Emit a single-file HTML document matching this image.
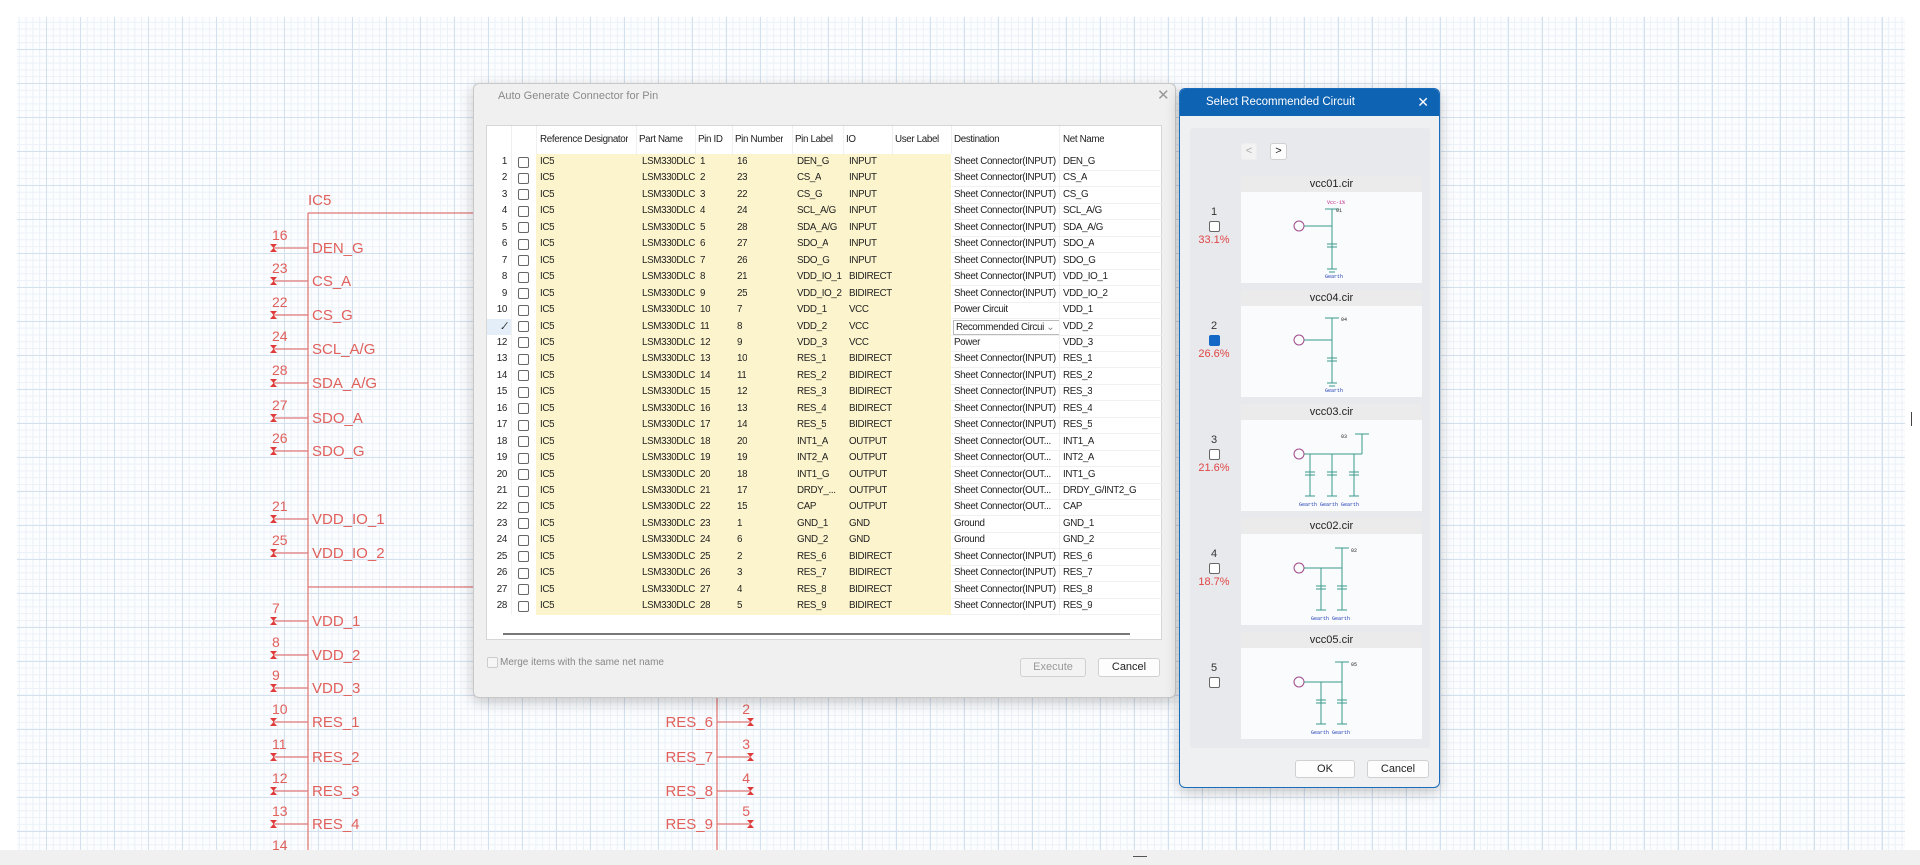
<!DOCTYPE html>
<html><head><meta charset="utf-8">
<style>
*{box-sizing:border-box;margin:0;padding:0}
body{width:1920px;height:865px;position:relative;overflow:hidden;background:#fff;font-family:"Liberation Sans",sans-serif}
#grid{position:absolute;left:17px;top:17px;width:1888px;height:833px;
background-color:#fcfdff;
background-image:
linear-gradient(to right,#d3e0ee 1px,transparent 1px),
linear-gradient(to bottom,#d3e0ee 1px,transparent 1px),
linear-gradient(to right,#ebf1f7 1px,transparent 1px),
linear-gradient(to bottom,#ebf1f7 1px,transparent 1px);
background-size:34px 34px,34px 34px,6.8px 6.8px,6.8px 6.8px;background-position:-5px -2px}
#bot{position:absolute;left:0;top:850px;width:1920px;height:15px;background:#f0f0f0}
.dlg{position:absolute;left:473px;top:83px;width:703px;height:615px;background:#f0f0f0;border:1px solid #c8c8c8;border-radius:6px;box-shadow:0 4px 14px rgba(0,0,0,.22)}
.tbl{position:absolute;left:486px;top:125px;width:676px;height:515px;background:#fff;border:1px solid #d6d6d6;font-size:9.8px;color:#222;letter-spacing:-.35px}
.c{position:absolute;white-space:nowrap;overflow:hidden}
.row{position:absolute;left:0;width:676px;height:16.45px;line-height:16.45px}
.cb{position:absolute;width:11px;height:11px;border:1px solid #555;border-radius:2px;background:#fff}
.btn{position:absolute;background:#fdfdfd;border:1px solid #d0d0d0;border-radius:3px;font-size:11px;text-align:center;color:#222}
.card{position:absolute;left:1241px;width:181px}
.card .h{height:16px;background:#ebebeb;font-size:11px;text-align:center;line-height:16px;color:#222}
.card .im{height:91px;background:#fafbfd}
.lab{position:absolute;width:40px;left:1194px;text-align:center;font-size:11px;color:#333}
.pct{color:#e04646}
</style></head><body>
<div id="grid"></div>
<div id="bot"><div style="position:absolute;left:1133px;top:6px;width:14px;height:1px;background:#555"></div></div>
<div style="position:absolute;left:1911px;top:412px;width:1px;height:14px;background:#444"></div>

<svg style="position:absolute;left:0;top:0" width="1920" height="865" font-family="Liberation Sans,sans-serif" fill="#e0605c">
<g stroke="#e07a78" stroke-width="1.3" fill="none">
<line x1="308" y1="213" x2="480" y2="213"/>
<line x1="308" y1="213" x2="308" y2="850"/>
<line x1="308" y1="587" x2="480" y2="587"/>
<line x1="717" y1="690" x2="717" y2="850"/>
</g>
<text x="308" y="205" font-size="15">IC5</text>
<g stroke="#e07a78" stroke-width="1.3">
<line x1="273" y1="248" x2="308" y2="248"/><line x1="273" y1="281" x2="308" y2="281"/><line x1="273" y1="315" x2="308" y2="315"/><line x1="273" y1="349" x2="308" y2="349"/><line x1="273" y1="383" x2="308" y2="383"/><line x1="273" y1="418" x2="308" y2="418"/><line x1="273" y1="451" x2="308" y2="451"/><line x1="273" y1="519" x2="308" y2="519"/><line x1="273" y1="553" x2="308" y2="553"/><line x1="273" y1="621" x2="308" y2="621"/><line x1="273" y1="655" x2="308" y2="655"/><line x1="273" y1="688" x2="308" y2="688"/><line x1="273" y1="722" x2="308" y2="722"/><line x1="273" y1="757" x2="308" y2="757"/><line x1="273" y1="791" x2="308" y2="791"/><line x1="273" y1="824" x2="308" y2="824"/>
<line x1="717" y1="722" x2="750" y2="722"/><line x1="717" y1="757" x2="750" y2="757"/><line x1="717" y1="791" x2="750" y2="791"/><line x1="717" y1="824" x2="750" y2="824"/>
</g>
<g fill="#e03b3b">
<path d="M270 244h7l-7 8h7z"/><path d="M270 277h7l-7 8h7z"/><path d="M270 311h7l-7 8h7z"/><path d="M270 345h7l-7 8h7z"/><path d="M270 379h7l-7 8h7z"/><path d="M270 414h7l-7 8h7z"/><path d="M270 447h7l-7 8h7z"/><path d="M270 515h7l-7 8h7z"/><path d="M270 549h7l-7 8h7z"/><path d="M270 617h7l-7 8h7z"/><path d="M270 651h7l-7 8h7z"/><path d="M270 684h7l-7 8h7z"/><path d="M270 718h7l-7 8h7z"/><path d="M270 753h7l-7 8h7z"/><path d="M270 787h7l-7 8h7z"/><path d="M270 820h7l-7 8h7z"/>
<path d="M747 718h7l-7 8h7z"/><path d="M747 753h7l-7 8h7z"/><path d="M747 787h7l-7 8h7z"/><path d="M747 820h7l-7 8h7z"/>
</g>
<g font-size="14">
<text x="272" y="240">16</text><text x="272" y="273">23</text><text x="272" y="307">22</text><text x="272" y="341">24</text><text x="272" y="375">28</text><text x="272" y="410">27</text><text x="272" y="443">26</text><text x="272" y="511">21</text><text x="272" y="545">25</text><text x="272" y="613">7</text><text x="272" y="647">8</text><text x="272" y="680">9</text><text x="272" y="714">10</text><text x="272" y="749">11</text><text x="272" y="783">12</text><text x="272" y="816">13</text><text x="272" y="850">14</text>
<text x="750" y="714" text-anchor="end">2</text><text x="750" y="749" text-anchor="end">3</text><text x="750" y="783" text-anchor="end">4</text><text x="750" y="816" text-anchor="end">5</text>
</g>
<g font-size="15">
<text x="312" y="253">DEN_G</text><text x="312" y="286">CS_A</text><text x="312" y="320">CS_G</text><text x="312" y="354">SCL_A/G</text><text x="312" y="388">SDA_A/G</text><text x="312" y="423">SDO_A</text><text x="312" y="456">SDO_G</text><text x="312" y="524">VDD_IO_1</text><text x="312" y="558">VDD_IO_2</text><text x="312" y="626">VDD_1</text><text x="312" y="660">VDD_2</text><text x="312" y="693">VDD_3</text><text x="312" y="727">RES_1</text><text x="312" y="762">RES_2</text><text x="312" y="796">RES_3</text><text x="312" y="829">RES_4</text>
<text x="713" y="727" text-anchor="end">RES_6</text><text x="713" y="762" text-anchor="end">RES_7</text><text x="713" y="796" text-anchor="end">RES_8</text><text x="713" y="829" text-anchor="end">RES_9</text>
</g>
</svg>

<div class="dlg"></div>
<div style="position:absolute;left:498px;top:90px;font-size:11px;color:#8a8a8a">Auto Generate Connector for Pin</div>
<div style="position:absolute;left:1157px;top:86px;font-size:15px;color:#999">✕</div>

<div class="tbl">
<div style="position:absolute;left:49px;top:28px;width:415px;height:460.6px;background:#fcf4cc"></div>
<div style="position:absolute;left:0;top:0;width:676px;height:28px;line-height:28px">
<span class="c" style="left:53px">Reference Designator</span><span class="c" style="left:152px">Part Name</span><span class="c" style="left:211px">Pin ID</span><span class="c" style="left:248px">Pin Number</span><span class="c" style="left:308px">Pin Label</span><span class="c" style="left:359px">IO</span><span class="c" style="left:408px">User Label</span><span class="c" style="left:467px">Destination</span><span class="c" style="left:576px">Net Name</span>
<i style="position:absolute;left:24px;top:0;width:1px;height:28px;background:#f0f0f0"></i><i style="position:absolute;left:49px;top:0;width:1px;height:28px;background:#f0f0f0"></i><i style="position:absolute;left:149px;top:0;width:1px;height:28px;background:#f0f0f0"></i><i style="position:absolute;left:208px;top:0;width:1px;height:28px;background:#f0f0f0"></i><i style="position:absolute;left:245px;top:0;width:1px;height:28px;background:#f0f0f0"></i><i style="position:absolute;left:305px;top:0;width:1px;height:28px;background:#f0f0f0"></i><i style="position:absolute;left:356px;top:0;width:1px;height:28px;background:#f0f0f0"></i><i style="position:absolute;left:405px;top:0;width:1px;height:28px;background:#f0f0f0"></i><i style="position:absolute;left:464px;top:0;width:1px;height:28px;background:#f0f0f0"></i><i style="position:absolute;left:572px;top:0;width:1px;height:28px;background:#f0f0f0"></i>
</div>
<div id="rows"></div>
<div style="position:absolute;left:16px;top:507px;width:627px;height:2px;background:#777"></div>
</div>

<script>
var lab=["DEN_G","CS_A","CS_G","SCL_A/G","SDA_A/G","SDO_A","SDO_G","VDD_IO_1","VDD_IO_2","VDD_1","VDD_2","VDD_3","RES_1","RES_2","RES_3","RES_4","RES_5","INT1_A","INT2_A","INT1_G","DRDY_...","CAP","GND_1","GND_2","RES_6","RES_7","RES_8","RES_9"];
var pn=[16,23,22,24,28,27,26,21,25,7,8,9,10,11,12,13,14,20,19,18,17,15,1,6,2,3,4,5];
var io=["INPUT","INPUT","INPUT","INPUT","INPUT","INPUT","INPUT","BIDIRECT","BIDIRECT","VCC","VCC","VCC","BIDIRECT","BIDIRECT","BIDIRECT","BIDIRECT","BIDIRECT","OUTPUT","OUTPUT","OUTPUT","OUTPUT","OUTPUT","GND","GND","BIDIRECT","BIDIRECT","BIDIRECT","BIDIRECT"];
var h="";
for(var i=0;i<28;i++){
var d=i<9||(i>=12&&i<17)||i>=24?"Sheet Connector(INPUT)":i==9?"Power Circuit":i==10?"":i==11?"Power":i<22?"Sheet Connector(OUT...":"Ground";
var net=i==20?"DRDY_G/INT2_G":lab[i];
var t=28+i*16.45;
h+='<div class="row" style="top:'+t+'px">'+
(i==10?'<span class="c" style="left:0;width:24px;height:16px;background:#e3eef9;text-align:right;padding-right:6px;font-style:italic;font-weight:bold">.&#x2215;</span>':'<span class="c" style="left:0;width:20px;text-align:right">'+(i+1)+'</span>')+
'<span class="cb" style="left:31px;top:2.5px;border-color:#666"></span>'+
'<span class="c" style="left:53px">IC5</span><span class="c" style="left:155px">LSM330DLC</span><span class="c" style="left:213px">'+(i+1)+'</span><span class="c" style="left:250px">'+pn[i]+'</span><span class="c" style="left:310px">'+lab[i]+'</span><span class="c" style="left:362px">'+io[i]+'</span>'+
(i==10?'<span class="c" style="left:466px;top:1px;width:107px;height:15px;line-height:13px;border:1px solid #bbb;background:#fff;padding-left:2px">Recommended Circui <span style="color:#888">&#8964;</span></span>':'<span class="c" style="left:467px;width:106px">'+d+'</span>')+
'<span class="c" style="left:576px">'+net+'</span>'+
'<i style="position:absolute;left:464px;top:16px;width:212px;height:1px;background:#f0f0f0"></i><i style="position:absolute;left:24px;top:0;width:1px;height:17px;background:#f0f0f0"></i><i style="position:absolute;left:572px;top:0;width:1px;height:17px;background:#f0f0f0"></i></div>';
}
document.getElementById("rows").innerHTML=h;
</script>

<div class="cb" style="left:487px;top:657px;border-color:#ccc;background:#f6f6f6"></div>
<div style="position:absolute;left:500px;top:657px;font-size:10px;color:#888">Merge items with the same net name</div>
<div class="btn" style="left:1020px;top:658px;width:66px;height:19px;line-height:17px;color:#999;background:#f3f3f3">Execute</div>
<div class="btn" style="left:1098px;top:658px;width:62px;height:19px;line-height:17px">Cancel</div>

<div style="position:absolute;left:1179px;top:88px;width:261px;height:700px;background:#eef0f2;border:1px solid #1a6cbd;border-radius:6px;box-shadow:0 4px 14px rgba(0,0,0,.22);overflow:hidden">
<div style="height:27px;background:#0f63b3;color:#fff;font-size:11.5px;line-height:26px;padding-left:26px">Select Recommended Circuit<span style="position:absolute;right:10px;top:0;font-size:14px">✕</span></div>
</div>
<div style="position:absolute;left:1190px;top:128px;width:240px;height:620px;background:#e7e9ec;border-radius:3px"></div>
<div class="btn" style="left:1241px;top:143px;width:16px;height:17px;line-height:15px;color:#aaa;background:#f2f2f2;border-color:#eee">&lt;</div>
<div class="btn" style="left:1270px;top:143px;width:17px;height:17px;line-height:15px">&gt;</div>

<div class="card" style="top:176px"><div class="h">vcc01.cir</div><div class="im"><svg width="181" height="91" font-family="Liberation Mono" font-size="5"><circle cx="58" cy="34" r="5" fill="none" stroke="#a04a8a"/><path d="M63 34h28M91 17v60M84 17h14M86 52h10M86 55h10M86 77h10M88 80h6" stroke="#3a9a8a" fill="none"/><text x="86" y="12" fill="#c0208a">Vcc-1%</text><text x="95" y="20" fill="#222">01</text><text x="84" y="86" fill="#1a3ab0">Gearth</text></svg></div></div>
<div class="card" style="top:290px"><div class="h">vcc04.cir</div><div class="im"><svg width="181" height="91" font-family="Liberation Mono" font-size="5"><circle cx="58" cy="34" r="5" fill="none" stroke="#a04a8a"/><path d="M63 34h28M91 12v65M84 12h14M86 52h10M86 55h10M86 77h10M88 80h6" stroke="#3a9a8a" fill="none"/><text x="100" y="15" fill="#222">04</text><text x="84" y="86" fill="#1a3ab0">Gearth</text></svg></div></div>
<div class="card" style="top:404px"><div class="h">vcc03.cir</div><div class="im"><svg width="181" height="91" font-family="Liberation Mono" font-size="5"><circle cx="58" cy="34" r="5" fill="none" stroke="#a04a8a"/><path d="M63 34h58M121 14v20M114 14h14M69 34v42M91 34v42M113 34v42M64 52h10M64 55h10M86 52h10M86 55h10M108 52h10M108 55h10M64 76h10M86 76h10M108 76h10" stroke="#3a9a8a" fill="none"/><text x="100" y="18" fill="#222">03</text><text x="58" y="86" fill="#1a3ab0">Gearth Gearth Gearth</text></svg></div></div>
<div class="card" style="top:518px"><div class="h">vcc02.cir</div><div class="im"><svg width="181" height="91" font-family="Liberation Mono" font-size="5"><circle cx="58" cy="34" r="5" fill="none" stroke="#a04a8a"/><path d="M63 34h38M101 14v62M94 14h14M80 34v42M75 52h10M75 55h10M96 52h10M96 55h10M75 76h10M96 76h10" stroke="#3a9a8a" fill="none"/><text x="110" y="18" fill="#222">02</text><text x="70" y="86" fill="#1a3ab0">Gearth Gearth</text></svg></div></div>
<div class="card" style="top:632px"><div class="h">vcc05.cir</div><div class="im"><svg width="181" height="91" font-family="Liberation Mono" font-size="5"><circle cx="58" cy="34" r="5" fill="none" stroke="#a04a8a"/><path d="M63 34h38M101 14v62M94 14h14M80 34v42M75 52h10M75 55h10M96 52h10M96 55h10M75 76h10M96 76h10" stroke="#3a9a8a" fill="none"/><text x="110" y="18" fill="#222">05</text><text x="70" y="86" fill="#1a3ab0">Gearth Gearth</text></svg></div></div>

<div class="lab" style="top:206px">1</div><div class="cb" style="left:1209px;top:221px;border-color:#666"></div><div class="lab pct" style="top:234px">33.1%</div>
<div class="lab" style="top:320px">2</div><div class="cb" style="left:1209px;top:335px;background:#1268c4;border-color:#1268c4"></div><div class="lab pct" style="top:348px">26.6%</div>
<div class="lab" style="top:434px">3</div><div class="cb" style="left:1209px;top:449px;border-color:#666"></div><div class="lab pct" style="top:462px">21.6%</div>
<div class="lab" style="top:548px">4</div><div class="cb" style="left:1209px;top:563px;border-color:#666"></div><div class="lab pct" style="top:576px">18.7%</div>
<div class="lab" style="top:662px">5</div><div class="cb" style="left:1209px;top:677px;border-color:#666"></div>

<div class="btn" style="left:1295px;top:760px;width:60px;height:18px;line-height:16px">OK</div>
<div class="btn" style="left:1367px;top:760px;width:62px;height:18px;line-height:16px">Cancel</div>
</body></html>
